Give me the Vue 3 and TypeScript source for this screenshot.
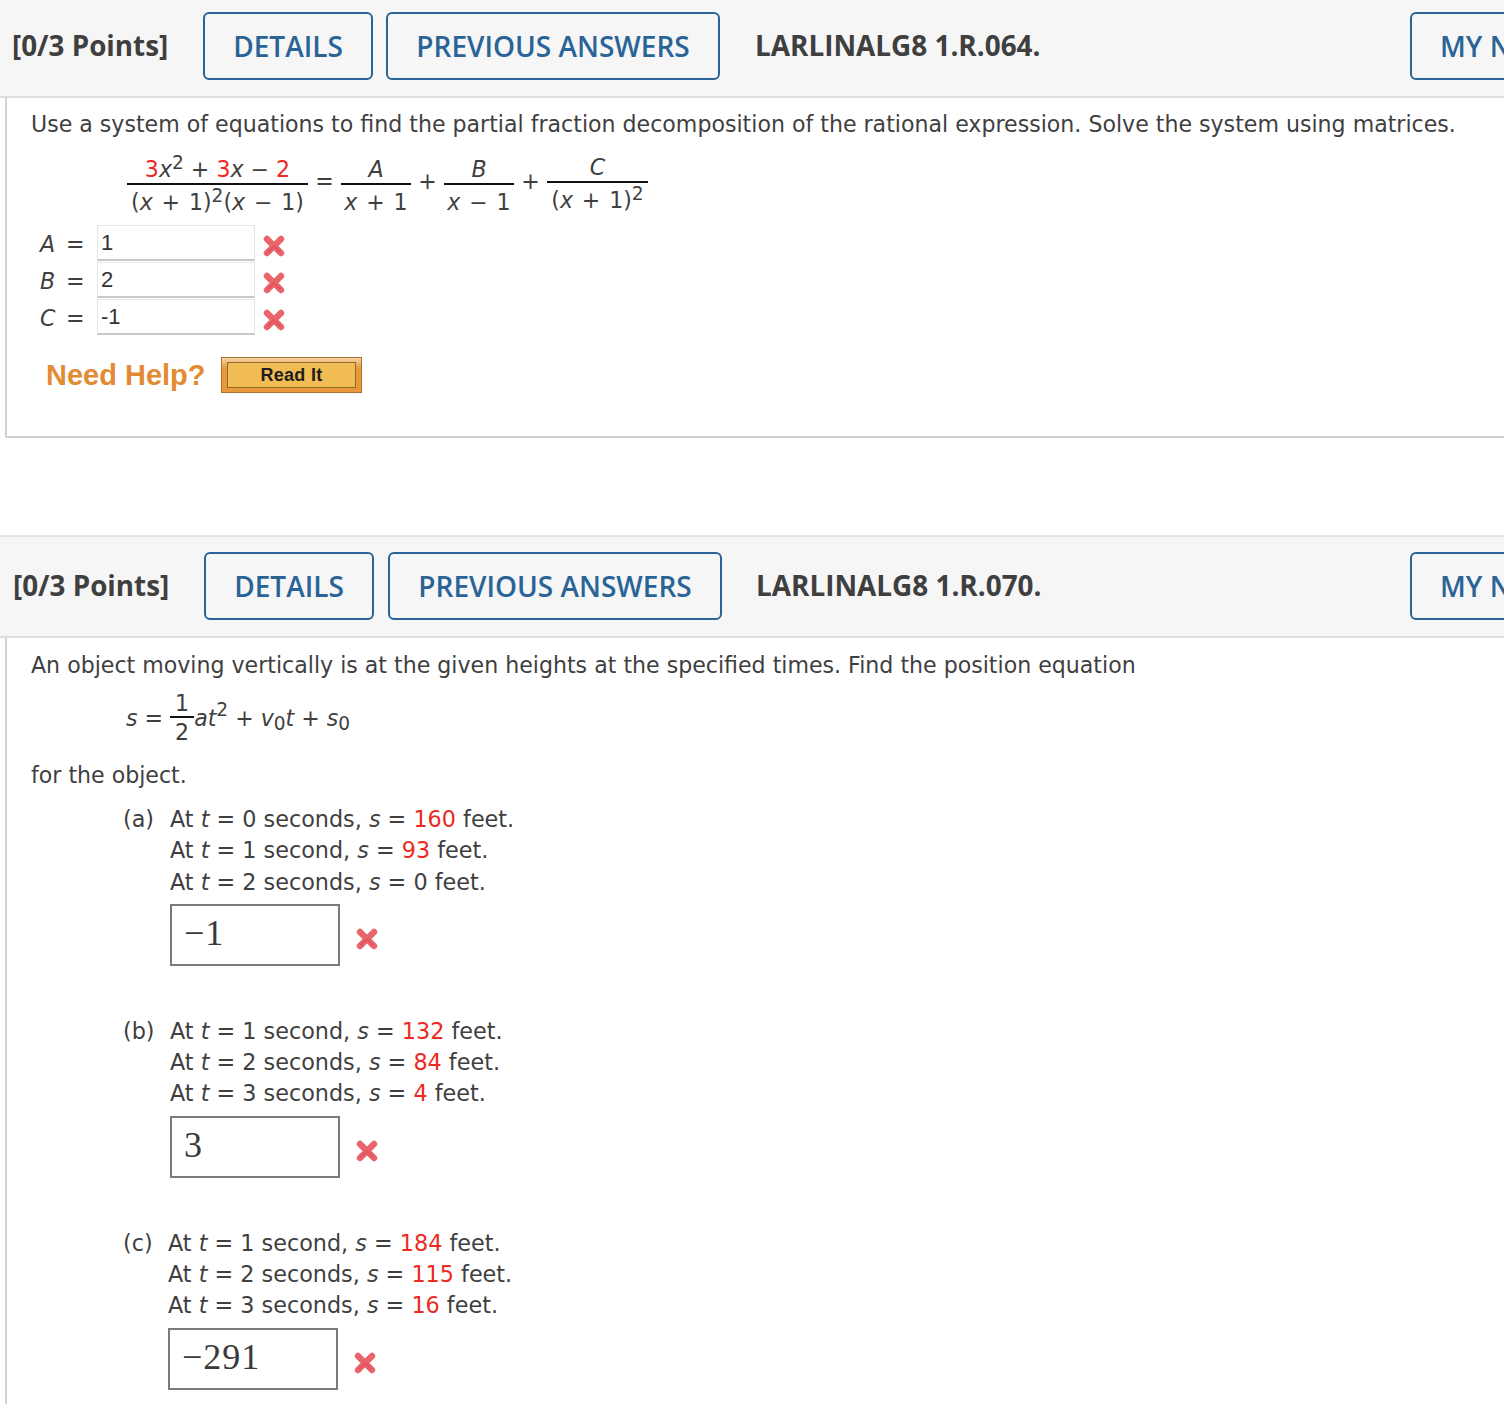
<template>
  <div class="page">
    <section class="question">
      <header class="q-head first">
        <span class="points">[0/3 Points]</span>
        <button class="head-btn details">DETAILS</button>
        <button class="head-btn previous">PREVIOUS ANSWERS</button>
        <span class="q-code">LARLINALG8 1.R.064.</span>
        <button class="head-btn notes">MY NOTES</button>
      </header>
      <div class="q-body body-one">
        <p class="lead">Use a system of equations to find the partial fraction decomposition of the rational expression. Solve the system using matrices.</p>
        <div class="equation">
          <div class="frac main">
            <span class="num"><b>3</b><i>x</i><sup>2</sup> + <b>3</b><i>x</i> − <b>2</b></span>
            <span class="den">(<i>x</i> + 1)<sup>2</sup>(<i>x</i> − 1)</span>
          </div>
          <span class="op">=</span>
          <div class="frac f-a">
            <span class="num"><i>A</i></span>
            <span class="den"><i>x</i> + 1</span>
          </div>
          <span class="op">+</span>
          <div class="frac f-b">
            <span class="num"><i>B</i></span>
            <span class="den"><i>x</i> − 1</span>
          </div>
          <span class="op">+</span>
          <div class="frac f-c">
            <span class="num"><i>C</i></span>
            <span class="den">(<i>x</i> + 1)<sup>2</sup></span>
          </div>
        </div>
        <div class="answers">
          <div v-for="row in coefficients" :key="row.name" class="answer-row">
            <span class="coef"><i>{{ row.name }}</i></span>
            <span class="coef coef-eq">=</span>
            <input class="small-input" :value="row.value" readonly />
            <svg class="cross" viewBox="0 0 24 24" width="24" height="24">
              <path d="M5 5 L19 19 M19 5 L5 19" stroke="#e9656b" stroke-width="6.4" stroke-linecap="round" />
              <path d="M12 12 L18 18 M12 12 L6 18" stroke="#dc4a50" stroke-width="2.4" stroke-linecap="round" opacity=".5" />
            </svg>
          </div>
        </div>
        <div class="help">
          <span class="need">Need Help?</span>
          <button class="read-it"><span>Read It</span></button>
        </div>
      </div>
    </section>

    <section class="question second">
      <header class="q-head">
        <span class="points">[0/3 Points]</span>
        <button class="head-btn details">DETAILS</button>
        <button class="head-btn previous">PREVIOUS ANSWERS</button>
        <span class="q-code">LARLINALG8 1.R.070.</span>
        <button class="head-btn notes">MY NOTES</button>
      </header>
      <div class="q-body body-two">
        <p class="lead">An object moving vertically is at the given heights at the specified times. Find the position equation</p>
        <div class="position">
          <i>s</i>&nbsp;=&nbsp;<div class="frac half"><span class="num">1</span><span class="den">2</span></div><i>at</i><sup>2</sup>&nbsp;+&nbsp;<i>v</i><sub>0</sub><i>t</i>&nbsp;+&nbsp;<i>s</i><sub>0</sub>
        </div>
        <p class="for-object">for the object.</p>

        <div v-for="part in parts" :key="part.label" class="part" :class="part.cls">
          <span class="part-label">({{ part.label }})</span>
          <div class="part-main">
            <p v-for="line in part.lines" :key="line.t" class="fact">
              At <i>t</i> = {{ line.t }} {{ line.unit }}, <i>s</i> = <b v-if="line.red">{{ line.s }}</b><template v-else>{{ line.s }}</template> feet.
            </p>
            <div class="big-answer">
              <div class="big-input">{{ part.answer }}</div>
              <svg class="cross" viewBox="0 0 24 24" width="24" height="24">
                <path d="M5 5 L19 19 M19 5 L5 19" stroke="#e9656b" stroke-width="6.4" stroke-linecap="round" />
                <path d="M12 12 L18 18 M12 12 L6 18" stroke="#dc4a50" stroke-width="2.4" stroke-linecap="round" opacity=".5" />
              </svg>
            </div>
          </div>
        </div>
      </div>
    </section>
  </div>
</template>

<script setup lang="ts">
interface Fact {
  t: number
  unit: string
  s: number
  red: boolean
}

const coefficients = [
  { name: 'A', value: '1' },
  { name: 'B', value: '2' },
  { name: 'C', value: '-1' }
]

const parts: { label: string; cls: string; answer: string; lines: Fact[] }[] = [
  {
    label: 'a',
    cls: 'part-a',
    answer: '−1',
    lines: [
      { t: 0, unit: 'seconds', s: 160, red: true },
      { t: 1, unit: 'second', s: 93, red: true },
      { t: 2, unit: 'seconds', s: 0, red: false }
    ]
  },
  {
    label: 'b',
    cls: 'part-b',
    answer: '3',
    lines: [
      { t: 1, unit: 'second', s: 132, red: true },
      { t: 2, unit: 'seconds', s: 84, red: true },
      { t: 3, unit: 'seconds', s: 4, red: true }
    ]
  },
  {
    label: 'c',
    cls: 'part-c',
    answer: '−291',
    lines: [
      { t: 1, unit: 'second', s: 184, red: true },
      { t: 2, unit: 'seconds', s: 115, red: true },
      { t: 3, unit: 'seconds', s: 16, red: true }
    ]
  }
]
</script>

<style>
html, body { margin: 0; background: #fff; }
</style>

<style scoped>
.page {
  width: 1504px;
  height: 1404px;
  overflow: hidden;
  font-family: "DejaVu Sans", Verdana, sans-serif;
  font-size: 22.1px;
  color: #3f3f3f;
}

.q-head {
  display: flex;
  align-items: center;
  box-sizing: border-box;
  overflow: hidden;
  background: #f6f6f6;
  border-bottom: 2px solid #dedede;
  font-family: "Open Sans", sans-serif;
  white-space: nowrap;
}
.q-head.first { height: 98px; padding: 0 0 4px 12px; }
.second { margin-top: 97px; }
.second .q-head { height: 103px; padding: 0 0 1px 13px; border-top: 2px solid #e4e4e4; }

.points {
  flex: none;
  width: 191px;
  margin-bottom: 2px;
  font-size: 27.8px;
  font-weight: 700;
  color: #3f3f3f;
}
.head-btn {
  flex: none;
  height: 68px;
  box-sizing: border-box;
  border: 2.5px solid #2a6496;
  border-radius: 6px;
  background: transparent;
  color: #2a6496;
  font-family: "Open Sans", sans-serif;
  font-size: 28px;
  font-weight: 600;
  padding: 0;
}
.details { width: 170px; margin-right: 13px; }
.second .details { margin-right: 14px; }
.previous { width: 334px; margin-right: 35px; }
.second .previous { margin-right: 34px; }
.q-code {
  flex: none;
  width: 655px;
  margin-bottom: 2px;
  font-size: 27.9px;
  font-weight: 700;
}
.second .q-code { width: 654px; }
.notes { width: 200px; text-align: left; padding-left: 28px; }

.q-body {
  margin-left: 5px;
  border-left: 2px solid #d2d2d2;
  box-sizing: border-box;
}
.body-one {
  height: 340px;
  border-bottom: 2px solid #d2d2d2;
  padding: 11px 0 0 24px;
}
.body-two { height: 800px; padding: 12px 0 0 24px; }

p { margin: 0; }
.lead { line-height: 30px; white-space: nowrap; }

i { font-style: italic; }
b { font-weight: normal; color: #ec2a1f; }
sup, sub { font-size: 84%; line-height: 0; }

.equation {
  display: flex;
  align-items: center;
  margin: 14px 0 0 96px;
  white-space: nowrap;
}
.frac {
  display: inline-flex;
  flex: none;
  flex-direction: column;
  align-items: center;
  vertical-align: middle;
}
.main { width: 181px; }
.f-a, .f-b { width: 70px; }
.f-c { width: 101px; margin-bottom: 3px; }
.num { line-height: 28px; white-space: nowrap; }
.den {
  line-height: 34px;
  border-top: 2px solid #111;
  align-self: stretch;
  text-align: center;
  white-space: nowrap;
  word-spacing: 1.8px;
}
.op { flex: none; width: 33px; margin-bottom: 12px; text-align: center; }

.answers {
  margin: 5px 0 0 9px;
  display: flex;
  flex-direction: column;
  gap: 1px;
}
.answer-row {
  display: flex;
  align-items: center;
  height: 36px;
}
.coef { width: 26px; padding-top: 2px; }
.coef-eq { width: 31px; }
.small-input {
  width: 158px;
  height: 36px;
  box-sizing: border-box;
  border: 1px solid #e6e6e6;
  border-bottom: 2px solid #c9c9c9;
  padding: 0 3px;
  font-family: "Liberation Sans", sans-serif;
  font-size: 22px;
  color: #333;
  outline: none;
  background: #fff;
}
.answer-row .cross { margin: 6px 0 0 7px; }
.cross { flex: none; display: block; filter: blur(.4px); }

.help {
  display: flex;
  align-items: center;
  margin: 22px 0 0 15px;
}
.need {
  font-family: "Liberation Sans", sans-serif;
  font-size: 29px;
  font-weight: bold;
  color: #e38b34;
  width: 175px;
}
.read-it {
  width: 141px;
  height: 36px;
  box-sizing: border-box;
  padding: 4px 5px;
  border: 1px solid #a9722f;
  background: linear-gradient(#f7d6a6, #e8973a 30%);
  font-family: "Liberation Sans", sans-serif;
  font-size: 18px;
  font-weight: bold;
  letter-spacing: .3px;
  color: #1c1c1c;
}
.read-it span {
  display: block;
  line-height: 24px;
  background: #f2bc55;
  border: 1px solid #8f6a2e;
}

.position {
  display: flex;
  align-items: center;
  margin: 10px 0 0 95px;
  height: 56px;
  white-space: pre;
}
.half .num { line-height: 26px; }
.half .den { line-height: 28px; padding: 0 5px; }
.position sub { position: relative; top: 6px; }
.position sup { position: relative; top: -8px; }

.for-object { margin-top: 14px; line-height: 30px; }

.part {
  display: flex;
  font-size: 22.3px;
  line-height: 31.3px;
  margin-left: 92px;
}
.part-a { margin-top: 14px; }
.part-b { margin-top: 50px; }
.part-c { margin-top: 50px; }
.part-label { width: 47px; }
.part-c .part-label { width: 45px; }
.fact { white-space: nowrap; }
.big-answer {
  display: flex;
  align-items: center;
  margin-top: 6px;
}
.big-input {
  width: 170px;
  height: 62px;
  box-sizing: border-box;
  border: 2px solid #7a7a7a;
  padding-left: 12px;
  font-family: "Liberation Serif", serif;
  font-size: 36px;
  letter-spacing: 1px;
  line-height: 54px;
  color: #3a3a3a;
}
.big-answer .cross { margin: 8px 0 0 15px; }
</style>
